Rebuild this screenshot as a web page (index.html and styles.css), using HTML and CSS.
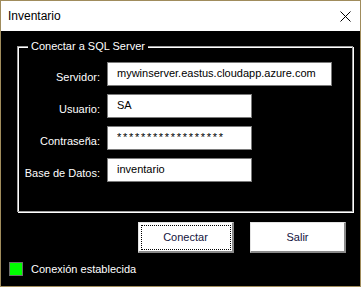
FILE: index.html
```html
<!DOCTYPE html>
<html lang="es">
<head>
    <meta charset="UTF-8">
    <meta name="viewport" content="width=device-width, initial-scale=1.0">
    <title>Inventario</title>
    <link rel="stylesheet" href="styles.css">
</head>
<body>

    <div class="window">
        <div class="titlebar">
            <span class="title">Inventario</span>
            <span class="close">
                <svg width="11" height="11" viewBox="0 0 11 11">
                    <path d="M0.5 0.5 L10.5 10.5 M10.5 0.5 L0.5 10.5" stroke="#000" stroke-width="1" fill="none"/>
                </svg>
            </span>
        </div>

        <div class="client">
            <fieldset class="group">
                <legend>Conectar a SQL Server</legend>
                <div class="form">
                    <label>Servidor:</label>
                    <input class="field wide" type="text" value="mywinserver.eastus.cloudapp.azure.com">
                    <label>Usuario:</label>
                    <input class="field" type="text" value="SA">
                    <label>Contraseña:</label>
                    <input class="field secret" type="text" value="******************">
                    <label>Base de Datos:</label>
                    <input class="field" type="text" value="inventario">
                </div>
            </fieldset>

            <div class="actions">
                <button class="btn focused">Conectar</button>
                <button class="btn">Salir</button>
            </div>

            <div class="status">
                <span class="led"></span>
                <span class="status-text">Conexión establecida</span>
            </div>
        </div>
    </div>

</body>
</html>
```

FILE: styles.css
```css
body {
    margin: 0;
    background-color: #000;
    font-family: "Liberation Sans", Arial, sans-serif;
    font-size: 11px;
}

.window {
    width: 361px;
    height: 287px;
    box-sizing: border-box;
    border: 1px solid #a08c5c;
    display: flex;
    flex-direction: column;
}

.titlebar {
    height: 30px;
    background-color: #fff;
    display: flex;
    align-items: center;
    justify-content: space-between;
    padding: 0 9px 0 7px;
}

.title {
    font-size: 12px;
    color: #000;
}

.close {
    display: flex;
}

.client {
    flex: 1;
    background-color: #000;
    display: flex;
    flex-direction: column;
}

.group {
    margin: 9px 7px 0 16px;
    padding: 0 0 29px 0;
    border: 1px solid #a0a0a0;
    box-shadow: inset 1px 1px 0 #fff, 1px 1px 0 #fff;
}

.group legend {
    margin-left: 10px;
    padding: 0 3px;
    line-height: 13px;
    color: #fff;
    background-color: #000;
}

.form {
    display: grid;
    grid-template-columns: 82px auto;
    grid-auto-rows: 24px;
    column-gap: 7px;
    row-gap: 8px;
    padding-top: 9px;
}

.form label {
    color: #fff;
    text-align: right;
    align-self: center;
    padding-top: 6px;
}

.field {
    justify-self: start;
    width: 145px;
    height: 24px;
    box-sizing: border-box;
    border: 1px solid #7a7a7a;
    padding: 0 9px 3px;
    margin: 0;
    font-family: "Liberation Sans", Arial, sans-serif;
    font-size: 11px;
    color: #000;
    background-color: #fff;
    outline: none;
}

.field.wide {
    width: 225px;
}

.field.secret {
    letter-spacing: 1.7px;
}

.actions {
    display: flex;
    justify-content: flex-end;
    gap: 16px;
    margin-top: 10px;
    padding-right: 14px;
}

.btn {
    width: 96px;
    height: 31px;
    box-sizing: border-box;
    background-color: #fff;
    border-top: 1px solid #e3e3e3;
    border-left: 1px solid #e3e3e3;
    border-right: 2px solid #8a8a8a;
    border-bottom: 2px solid #8a8a8a;
    font-family: "Liberation Sans", Arial, sans-serif;
    font-size: 11px;
    color: #141440;
    padding: 0;
}

.btn.focused {
    outline: 1px dotted #000;
    outline-offset: -4px;
}

.status {
    display: flex;
    align-items: center;
    margin-top: 9px;
    padding-left: 8px;
}

.led {
    width: 14px;
    height: 14px;
    box-sizing: border-box;
    border: 1px solid #6e6e6e;
    background-color: #00ff00;
}

.status-text {
    margin-left: 8px;
    color: #fff;
}
```
